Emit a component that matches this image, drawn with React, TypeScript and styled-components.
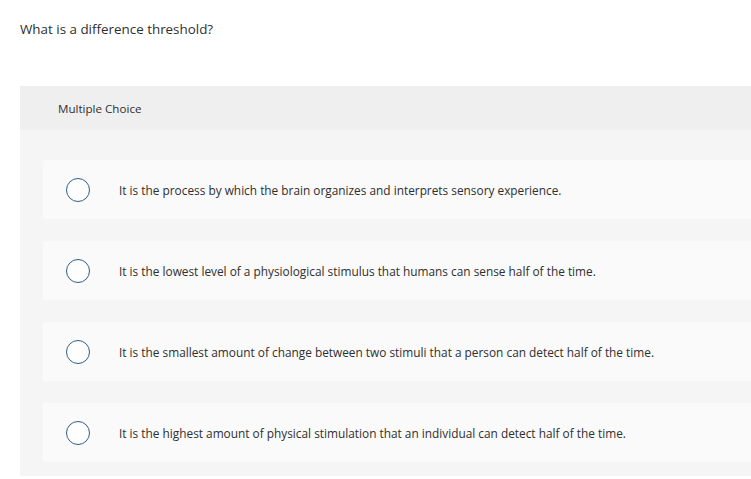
import React from "react";
import styled, { createGlobalStyle } from "styled-components";

const Global = createGlobalStyle`
  html, body { margin: 0; padding: 0; background: #ffffff; }
  body { font-family: "Open Sans", Lato, sans-serif; color: #333333; overflow: hidden; }
`;

const Page = styled.div`
  padding: 21px 0 0 20px;
  width: 731px;
`;

const Question = styled.p`
  margin: 0;
  font-size: 13.4px;
  line-height: 17px;
  color: #2f2f2f;
`;

const Panel = styled.section`
  margin-top: 48px;
  width: 740px;
`;

const PanelHeader = styled.div`
  background: #efefef;
  height: 44px;
  display: flex;
  align-items: center;
  padding-left: 38px;
  font-size: 11.6px;
  color: #2f2f2f;
`;

const PanelBody = styled.div`
  background: #f5f5f5;
  padding: 30px 0 14px 23px;
  display: flex;
  flex-direction: column;
  gap: 22px;
`;

const Option = styled.label`
  background: #fafafa;
  height: 59px;
  display: flex;
  align-items: center;
  padding-left: 23px;
  border-radius: 2px 0 0 2px;
  cursor: pointer;
`;

const Radio = styled.span`
  width: 22px;
  height: 22px;
  border: 1.5px solid #2c5d8c;
  border-radius: 50%;
  background: #ffffff;
  flex: none;
`;

const OptionText = styled.span`
  margin-left: 29px;
  font-size: 11.85px;
  color: #2f2f2f;
`;

const options = [
  "It is the process by which the brain organizes and interprets sensory experience.",
  "It is the lowest level of a physiological stimulus that humans can sense half of the time.",
  "It is the smallest amount of change between two stimuli that a person can detect half of the time.",
  "It is the highest amount of physical stimulation that an individual can detect half of the time.",
];

export default function App() {
  return (
    <>
      <Global />
      <Page>
        <Question>What is a difference threshold?</Question>
        <Panel>
          <PanelHeader>Multiple Choice</PanelHeader>
          <PanelBody>
            {options.map((o) => (
              <Option key={o}>
                <Radio />
                <OptionText>{o}</OptionText>
              </Option>
            ))}
          </PanelBody>
        </Panel>
      </Page>
    </>
  );
}
